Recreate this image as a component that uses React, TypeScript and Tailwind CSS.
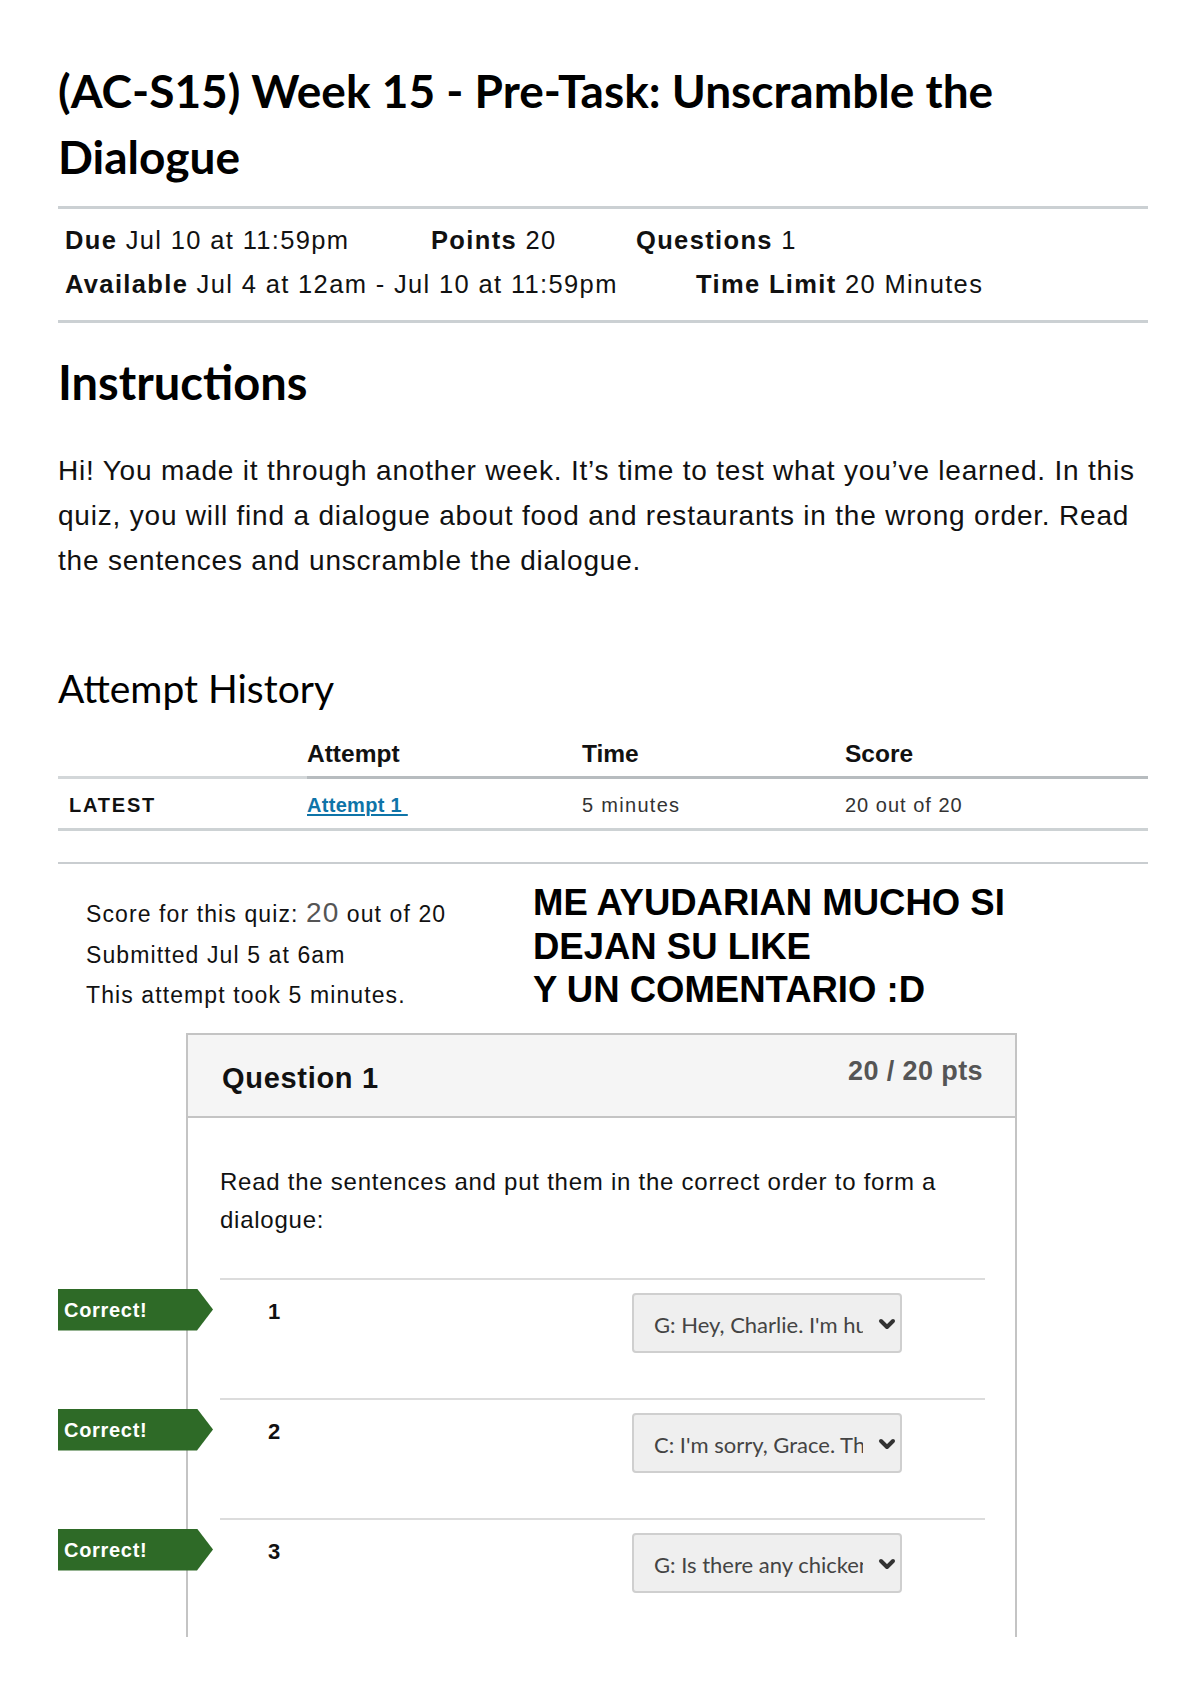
import React from "react";

const answers = [
  "G: Hey, Charlie. I'm hungry",
  "C: I'm sorry, Grace. There",
  "G: Is there any chicken",
];

export default function App() {
  return (
    <main className="min-h-[1697px] w-[1200px] bg-white font-['Liberation_Sans',Arial,sans-serif] text-[#111]">
      <div className="ml-[58px] w-[1090px] pt-[58px]">
        <h1 className="font-['Lato',sans-serif] text-[46px] font-bold leading-[66px] text-black">
          (AC-S15) Week 15 - Pre-Task: Unscramble the Dialogue
        </h1>

        {/* Details */}
        <div className="mt-[16px] border-y-[3px] border-[#cbd0d3] pb-[14px] pt-[9px] text-[25.5px] leading-[44px] tracking-[1.35px]">
          <div className="ml-[7px] flex">
            <div className="w-[366px]">
              <b>Due</b> Jul 10 at 11:59pm
            </div>
            <div className="w-[205px]">
              <b>Points</b> 20
            </div>
            <div>
              <b>Questions</b> 1
            </div>
          </div>
          <div className="ml-[7px] flex">
            <div className="w-[631px]">
              <b>Available</b> Jul 4 at 12am - Jul 10 at 11:59pm
            </div>
            <div>
              <b>Time Limit</b> 20 Minutes
            </div>
          </div>
        </div>

        <h2 className="mt-[32px] font-['Lato',sans-serif] text-[47px] font-bold leading-[55px] text-black">
          Instructions
        </h2>
        <p className="mt-[38px] text-[28px] leading-[45px] tracking-[0.8px]">
          Hi! You made it through another week. It’s time to test what you’ve learned. In this
          quiz, you will find a dialogue about food and restaurants in the wrong order. Read the
          sentences and unscramble the dialogue.
        </p>

        <h2 className="mt-[82px] font-['Lato',sans-serif] text-[39px] leading-[46px] text-black">
          Attempt History
        </h2>

        {/* Attempt table */}
        <div className="mt-[28px] grid grid-cols-[249px_275px_263px_1fr]">
          <div className="border-b-[3px] border-[#d3d7d9]" />
          <div className="border-b-[3px] border-[#b7bcbf] pb-[7px] text-[24.5px] font-bold leading-[30px]">Attempt</div>
          <div className="border-b-[3px] border-[#b7bcbf] pb-[7px] text-[24.5px] font-bold leading-[30px]">Time</div>
          <div className="border-b-[3px] border-[#b7bcbf] pb-[7px] text-[24.5px] font-bold leading-[30px]">Score</div>

          <div className="border-b-[3px] border-[#cdd2d4] pb-[9px] pl-[11px] pt-[12px] text-[20px] font-bold leading-[28px] tracking-[1.8px]">
            LATEST
          </div>
          <div className="border-b-[3px] border-[#cdd2d4] pb-[9px] pt-[12px] text-[20px] leading-[28px]">
            <a className="font-bold tracking-[0.3px] text-[#0e74a8] underline underline-offset-2">Attempt 1&nbsp;</a>
          </div>
          <div className="border-b-[3px] border-[#cdd2d4] pb-[9px] pt-[12px] text-[20px] leading-[28px] tracking-[1.3px] text-[#333]">
            5 minutes
          </div>
          <div className="border-b-[3px] border-[#cdd2d4] pb-[9px] pt-[12px] text-[20px] leading-[28px] tracking-[1px] text-[#333]">
            20 out of 20
          </div>
        </div>

        <div className="mt-[31px] border-t-2 border-[#c9cdd0]" />

        {/* Score summary */}
        <div className="mt-[17px] flex">
          <div className="ml-[28px] w-[447px] pt-[12px] text-[23px] leading-[40.5px] tracking-[1.1px]">
            <div>
              Score for this quiz: <span className="text-[28px] text-[#555]">20</span> out of 20
            </div>
            <div>Submitted Jul 5 at 6am</div>
            <div>This attempt took 5 minutes.</div>
          </div>
          <div className="text-[36.5px] font-bold leading-[43.5px] text-black">
            ME AYUDARIAN MUCHO SI
            <br />
            DEJAN SU LIKE
            <br />Y UN COMENTARIO :D
          </div>
        </div>
      </div>

      {/* Question card */}
      <section className="ml-[186px] mt-[17px] h-[604px] w-[831px] border-x-2 border-t-2 border-[#c4c4c4]">
        <header className="flex h-[83px] justify-between border-b-2 border-[#c4c4c4] bg-[#f5f5f5] pl-[34px] pr-[32px]">
          <h3 className="mt-[26px] text-[29px] font-bold leading-[34px] tracking-[0.7px]">Question 1</h3>
          <span className="mt-[20px] text-[27px] font-bold leading-[32px] tracking-[0.4px] text-[#555]">20 / 20 pts</span>
        </header>

        <div className="pl-[32px] pr-[30px]">
          <p className="pt-[45px] text-[24px] leading-[38px] tracking-[0.75px]">
            Read the sentences and put them in the correct order to form a dialogue:
          </p>

          <div className="mt-[39px]">
            {answers.map((text, i) => (
              <AnswerRow key={i} num={i + 1} text={text} />
            ))}
          </div>
        </div>
      </section>
    </main>
  );
}

function AnswerRow({ num, text }: { num: number; text: string }) {
  return (
    <div className="relative flex h-[120px] items-start border-t-2 border-[#dcdcdc]">
      <div className="absolute left-[-162px] top-[9px] flex h-[42px] w-[155px] items-center bg-[#2e6a27] pl-[6px] text-[20px] font-bold tracking-[0.7px] text-white [clip-path:polygon(0_0,139px_0,155px_50%,139px_100%,0_100%)]">
        Correct!
      </div>
      <span className="ml-[48px] mt-[19px] w-[364px] text-[22px] font-bold leading-[26px]">{num}</span>
      <div className="mt-[13px] flex h-[60px] w-[270px] items-center rounded-[4px] border-2 border-[#cfcfcf] bg-[#efefef] pl-[20px] pr-[4px]">
        <span className="mt-[4px] w-[209px] shrink-0 overflow-hidden whitespace-nowrap font-['Lato',sans-serif] text-[22px] leading-[28px] text-[#444]">
          {text}
        </span>
        <svg className="ml-auto mt-[2px]" width="18" height="14" viewBox="0 0 18 14">
          <path d="M3 4 L9 10 L15 4" fill="none" stroke="#333" strokeWidth="4" strokeLinecap="round" strokeLinejoin="round" />
        </svg>
      </div>
    </div>
  );
}
